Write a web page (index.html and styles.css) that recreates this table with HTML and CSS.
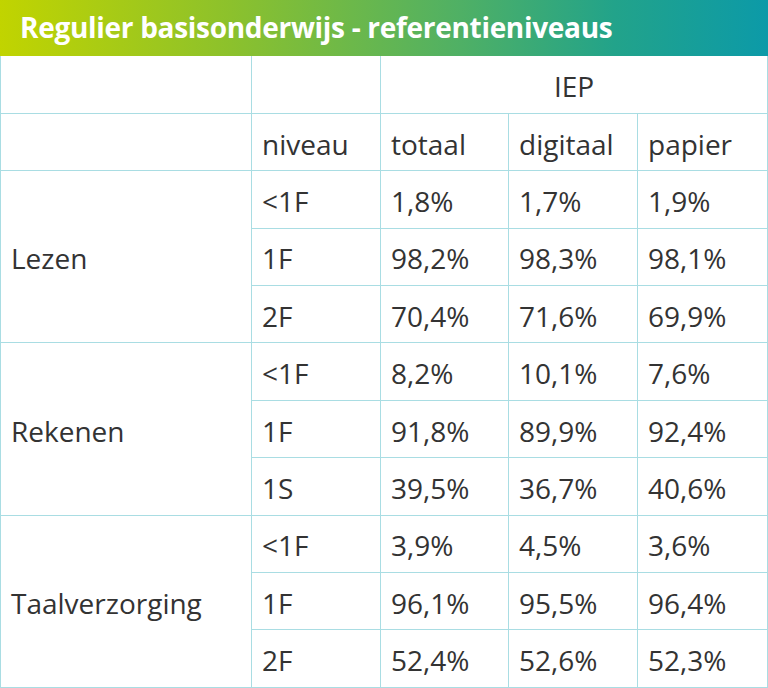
FILE: index.html
```html
<!DOCTYPE html>
<html lang="nl">
<head>
<meta charset="utf-8">
<link rel="stylesheet" href="styles.css">
</head>
<body>
<div class="card">
  <div class="title">Regulier basisonderwijs - referentieniveaus</div>
  <table class="grid">
    <colgroup>
      <col class="c1"><col class="c2"><col class="c3"><col class="c4"><col class="c5">
    </colgroup>
    <tr><td></td><td></td><td colspan="3" class="center">IEP</td></tr>
    <tr><td></td><td>niveau</td><td>totaal</td><td>digitaal</td><td>papier</td></tr>
    <tr><td rowspan="3">Lezen</td><td>&lt;1F</td><td>1,8%</td><td>1,7%</td><td>1,9%</td></tr>
    <tr><td>1F</td><td>98,2%</td><td>98,3%</td><td>98,1%</td></tr>
    <tr><td>2F</td><td>70,4%</td><td>71,6%</td><td>69,9%</td></tr>
    <tr><td rowspan="3">Rekenen</td><td>&lt;1F</td><td>8,2%</td><td>10,1%</td><td>7,6%</td></tr>
    <tr><td>1F</td><td>91,8%</td><td>89,9%</td><td>92,4%</td></tr>
    <tr><td>1S</td><td>39,5%</td><td>36,7%</td><td>40,6%</td></tr>
    <tr><td rowspan="3">Taalverzorging</td><td>&lt;1F</td><td>3,9%</td><td>4,5%</td><td>3,6%</td></tr>
    <tr><td>1F</td><td>96,1%</td><td>95,5%</td><td>96,4%</td></tr>
    <tr><td>2F</td><td>52,4%</td><td>52,6%</td><td>52,3%</td></tr>
  </table>
</div>
</body>
</html>
```

FILE: styles.css
```css
html, body {
  margin: 0;
  padding: 0;
  background: #ffffff;
}
.card {
  width: 768px;
  font-family: "Open Sans", "Noto Sans", sans-serif;
}
.title {
  height: 56px;
  box-sizing: border-box;
  padding: 0 0 2px 20px;
  display: flex;
  align-items: center;
  color: #ffffff;
  font-weight: 700;
  font-size: 28px;
  letter-spacing: -0.3px;
  background: linear-gradient(90deg, #c1d400 0%, #8cc12c 30%, #4fb065 60%, #22a38a 80%, #0c9aa8 100%);
}
.grid {
  border-collapse: collapse;
  table-layout: fixed;
  width: 767px;
  margin-left: 0;
}
.c1 { width: 251px; }
.c2 { width: 129px; }
.c3 { width: 128px; }
.c4 { width: 129px; }
.c5 { width: 130px; }
.grid td {
  border: 1.5px solid #a9dde3;
  height: 57.4px;
  box-sizing: border-box;
  padding: 3px 0 0 10px;
  font-size: 28px;
  color: #333333;
  vertical-align: middle;
  white-space: nowrap;
}
.grid td.center {
  text-align: center;
  padding-left: 0;
}
.grid tr:first-child td { border-top: none; }
```
